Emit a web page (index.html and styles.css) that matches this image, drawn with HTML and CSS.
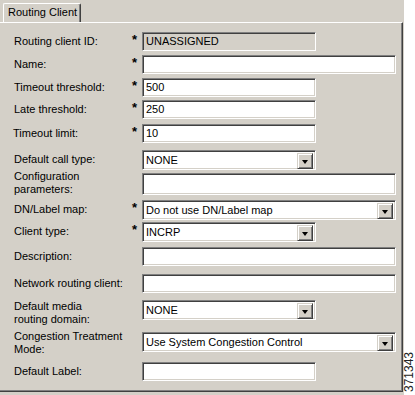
FILE: index.html
```html
<!DOCTYPE html>
<html lang="en">
<head>
    <meta charset="UTF-8">
    <meta name="viewport" content="width=device-width, initial-scale=1.0">
    <title>Routing Client</title>
    <link rel="stylesheet" href="styles.css">
</head>
<body>
    <div class="page">
        <div class="window">
            <div class="tabs">
                <div class="tab">Routing Client</div>
            </div>
            <div class="panel">
                <div class="form">
                    <div class="row">
                        <label class="label">Routing client ID:</label>
                        <span class="req">*</span>
                        <div class="box short readonly">UNASSIGNED</div>
                    </div>
                    <div class="row">
                        <label class="label">Name:</label>
                        <span class="req">*</span>
                        <div class="box long"></div>
                    </div>
                    <div class="row">
                        <label class="label">Timeout threshold:</label>
                        <span class="req">*</span>
                        <div class="box short">500</div>
                    </div>
                    <div class="row">
                        <label class="label">Late threshold:</label>
                        <span class="req">*</span>
                        <div class="box short">250</div>
                    </div>
                    <div class="row">
                        <label class="label nudge">Timeout limit:</label>
                        <span class="req">*</span>
                        <div class="box short">10</div>
                    </div>
                    <div class="row">
                        <label class="label">Default call type:</label>
                        <span class="req"></span>
                        <div class="box select short">NONE<span class="drop"></span></div>
                    </div>
                    <div class="row">
                        <label class="label two config">Configuration<br>parameters:</label>
                        <span class="req"></span>
                        <div class="box long tall"></div>
                    </div>
                    <div class="row">
                        <label class="label">DN/Label map:</label>
                        <span class="req">*</span>
                        <div class="box select long">Do not use DN/Label map<span class="drop"></span></div>
                    </div>
                    <div class="row">
                        <label class="label">Client type:</label>
                        <span class="req">*</span>
                        <div class="box select short">INCRP<span class="drop"></span></div>
                    </div>
                    <div class="row">
                        <label class="label">Description:</label>
                        <span class="req"></span>
                        <div class="box long"></div>
                    </div>
                    <div class="row">
                        <label class="label">Network routing client:</label>
                        <span class="req"></span>
                        <div class="box long"></div>
                    </div>
                    <div class="row">
                        <label class="label two media">Default media<br>routing domain:</label>
                        <span class="req"></span>
                        <div class="box select short">NONE<span class="drop"></span></div>
                    </div>
                    <div class="row">
                        <label class="label two congestion">Congestion Treatment<br>Mode:</label>
                        <span class="req"></span>
                        <div class="box select long">Use System Congestion Control<span class="drop"></span></div>
                    </div>
                    <div class="row">
                        <label class="label">Default Label:</label>
                        <span class="req"></span>
                        <div class="box short"></div>
                    </div>
                </div>
            </div>
        </div>
        <div class="figure-id">371343</div>
    </div>
</body>
</html>
```

FILE: styles.css
```css
:root {
    --face: #d4d0c8;
    --light: #ffffff;
    --shadow: #808080;
    --dark: #404040;
}

body {
    margin: 0;
    background: #ffffff;
    font-family: "Liberation Sans", Arial, sans-serif;
    font-size: 11px;
    color: #000000;
}

.page {
    display: flex;
    width: 415px;
    height: 395px;
    overflow: hidden;
}

.window {
    width: 404px;
    height: 395px;
    background: var(--face);
    display: flex;
    flex-direction: column;
}

.tabs {
    height: 22px;
    display: flex;
    align-items: flex-end;
    padding-left: 3px;
}

.tab {
    height: 18px;
    width: 72px;
    padding-left: 4px;
    line-height: 17px;
    border-top: 1px solid var(--light);
    border-left: 1px solid var(--light);
    border-right: 1px solid var(--dark);
    box-shadow: inset -1px 0 var(--shadow);
    border-radius: 2px 2px 0 0;
}

.panel {
    height: 368px;
    border-top: 1px solid var(--light);
    border-right: 1px solid var(--dark);
    border-bottom: 1px solid var(--dark);
    box-shadow: inset -1px -1px var(--shadow);
    margin-right: 1px;
}

.form {
    display: grid;
    grid-template-rows: 23px 23px 22px 24px 26px 23px 27px 22px 25px 27px 26px 32px 30px 20px;
    padding: 9px 0 0 14px;
}

.row {
    display: flex;
    align-items: flex-start;
}

.label {
    width: 118px;
    line-height: 19px;
    white-space: nowrap;
}

.label.nudge {
    margin-left: -1px;
    margin-right: 1px;
}

.label.two {
    line-height: 13px;
}

.label.config {
    margin-top: -3px;
}

.label.media {
    margin-top: 0;
}

.label.congestion {
    margin-top: -2px;
}

.req {
    width: 10px;
    font-size: 13px;
    font-weight: bold;
    line-height: 15px;
}

.box {
    position: relative;
    box-sizing: border-box;
    height: 19px;
    padding: 0 0 0 3px;
    line-height: 17px;
    background: #ffffff;
    border: 1px solid;
    border-color: var(--shadow) var(--light) var(--light) var(--shadow);
    box-shadow: inset 1px 1px var(--dark), inset -1px -1px var(--face);
    white-space: nowrap;
    overflow: hidden;
}

.box.short {
    width: 174px;
}

.box.long {
    width: 254px;
}

.box.tall {
    height: 22px;
}

.box.readonly {
    background: var(--face);
}

.box.select {
    height: 20px;
    line-height: 18px;
}

.drop {
    position: absolute;
    top: 2px;
    right: 2px;
    width: 16px;
    height: 16px;
    box-sizing: border-box;
    background: var(--face);
    border: 1px solid;
    border-color: var(--face) var(--dark) var(--dark) var(--face);
    box-shadow: inset 1px 1px var(--light), inset -1px -1px var(--shadow);
}

.drop::after {
    content: "";
    position: absolute;
    left: 4px;
    top: 6px;
    border-left: 3.5px solid transparent;
    border-right: 3.5px solid transparent;
    border-top: 4px solid #000000;
}

.figure-id {
    width: 11px;
    writing-mode: vertical-rl;
    transform: rotate(180deg);
    align-self: flex-end;
    font-size: 12px;
    line-height: 11px;
    margin-bottom: 3px;
    color: #222222;
}
```
